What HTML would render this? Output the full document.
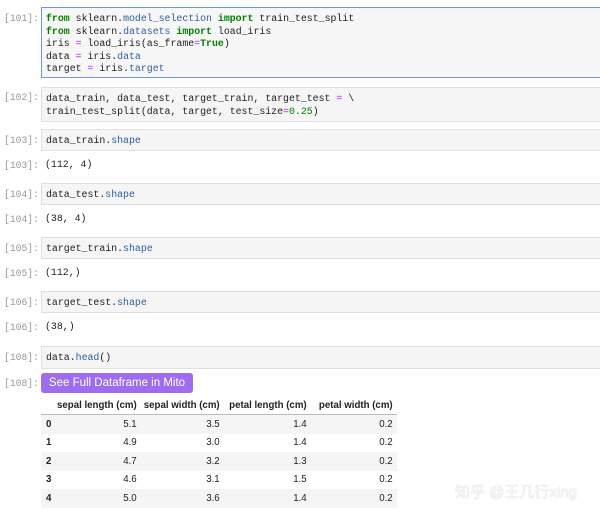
<!DOCTYPE html>
<html><head><meta charset="utf-8"><style>
body{margin:0;width:600px;height:518px;background:#fff;position:relative;overflow:hidden;font-family:"Liberation Mono","DejaVu Sans Mono",monospace;font-size:9.9px;color:#222}
.p{position:absolute;left:4px;color:#999;font-size:9.7px}
.c{position:absolute;left:41px;width:600px;background:#f5f5f5;border:1px solid #e0e0e0;box-sizing:border-box;padding:5px 4px;line-height:12.5px;white-space:pre}
.o{position:absolute;left:45px;white-space:pre}
.k{color:#008000;font-weight:bold}.a{color:#2f5f9f}.e{color:#aa22ff}.n{color:#008000}
.btn{position:absolute;left:41px;top:373px;width:152px;height:20px;background:#9d6cf0;border-radius:3px;color:#fff;font-family:"Liberation Sans",sans-serif;font-size:11.5px;line-height:20px;text-align:center}
table{position:absolute;left:41px;top:397px;border-collapse:collapse;font-family:"Liberation Sans",sans-serif;font-size:9.7px;color:#222;table-layout:fixed}
th{font-weight:bold;text-align:right;height:17px;padding:0 4px 0 0;border-bottom:1px solid #bbb;white-space:nowrap}
td{text-align:right;height:18.5px;padding:0 4px 0 0}
td:first-child{text-align:left;font-weight:bold;padding-left:5px}
tr:nth-child(even) td{background:#f5f5f5}
.wm{position:absolute;left:455px;top:481px;font-family:"Liberation Sans","Noto Sans CJK SC",sans-serif;font-size:15px;color:#f7f7f7;text-shadow:0 0 1px #bbb}
</style></head><body>
<div class="p" style="top:13px">[101]:</div>
<div class="c" style="top:7px;height:71px;border-color:#6a9ad8;background:#f7f7f7"><span class="k">from</span> sklearn.<span class="a">model_selection</span> <span class="k">import</span> train_test_split
<span class="k">from</span> sklearn.<span class="a">datasets</span> <span class="k">import</span> load_iris
iris <span class="e">=</span> load_iris(as_frame<span class="e">=</span><span class="k">True</span>)
data <span class="e">=</span> iris.<span class="a">data</span>
target <span class="e">=</span> iris.<span class="a">target</span></div>
<div class="p" style="top:92px">[102]:</div>
<div class="c" style="top:87px;height:35px">data_train, data_test, target_train, target_test <span class="e">=</span> \
train_test_split(data, target, test_size<span class="e">=</span><span class="n">0.25</span>)</div>
<div class="p" style="top:135px">[103]:</div>
<div class="c" style="top:129px;height:22px">data_train.<span class="a">shape</span></div>
<div class="p" style="top:160px">[103]:</div><div class="o" style="top:159px">(112, 4)</div>
<div class="p" style="top:189px">[104]:</div>
<div class="c" style="top:183px;height:22px">data_test.<span class="a">shape</span></div>
<div class="p" style="top:214px">[104]:</div><div class="o" style="top:213px">(38, 4)</div>
<div class="p" style="top:243px">[105]:</div>
<div class="c" style="top:237px;height:22px">target_train.<span class="a">shape</span></div>
<div class="p" style="top:268px">[105]:</div><div class="o" style="top:267px">(112,)</div>
<div class="p" style="top:297px">[106]:</div>
<div class="c" style="top:291px;height:22px">target_test.<span class="a">shape</span></div>
<div class="p" style="top:322px">[106]:</div><div class="o" style="top:321px">(38,)</div>
<div class="p" style="top:352px">[108]:</div>
<div class="c" style="top:346px;height:23px">data.<span class="a">head</span>()</div>
<div class="p" style="top:378px">[108]:</div>
<div class="btn">See Full Dataframe in Mito</div>
<table>
<colgroup><col style="width:16px"><col style="width:83px"><col style="width:83px"><col style="width:87px"><col style="width:86px"></colgroup>
<tr><th></th><th>sepal length (cm)</th><th>sepal width (cm)</th><th>petal length (cm)</th><th>petal width (cm)</th></tr>
<tr><td>0</td><td>5.1</td><td>3.5</td><td>1.4</td><td>0.2</td></tr>
<tr><td>1</td><td>4.9</td><td>3.0</td><td>1.4</td><td>0.2</td></tr>
<tr><td>2</td><td>4.7</td><td>3.2</td><td>1.3</td><td>0.2</td></tr>
<tr><td>3</td><td>4.6</td><td>3.1</td><td>1.5</td><td>0.2</td></tr>
<tr><td>4</td><td>5.0</td><td>3.6</td><td>1.4</td><td>0.2</td></tr>
</table>
<div class="wm">知乎 @王几行xing</div>
</body></html>
